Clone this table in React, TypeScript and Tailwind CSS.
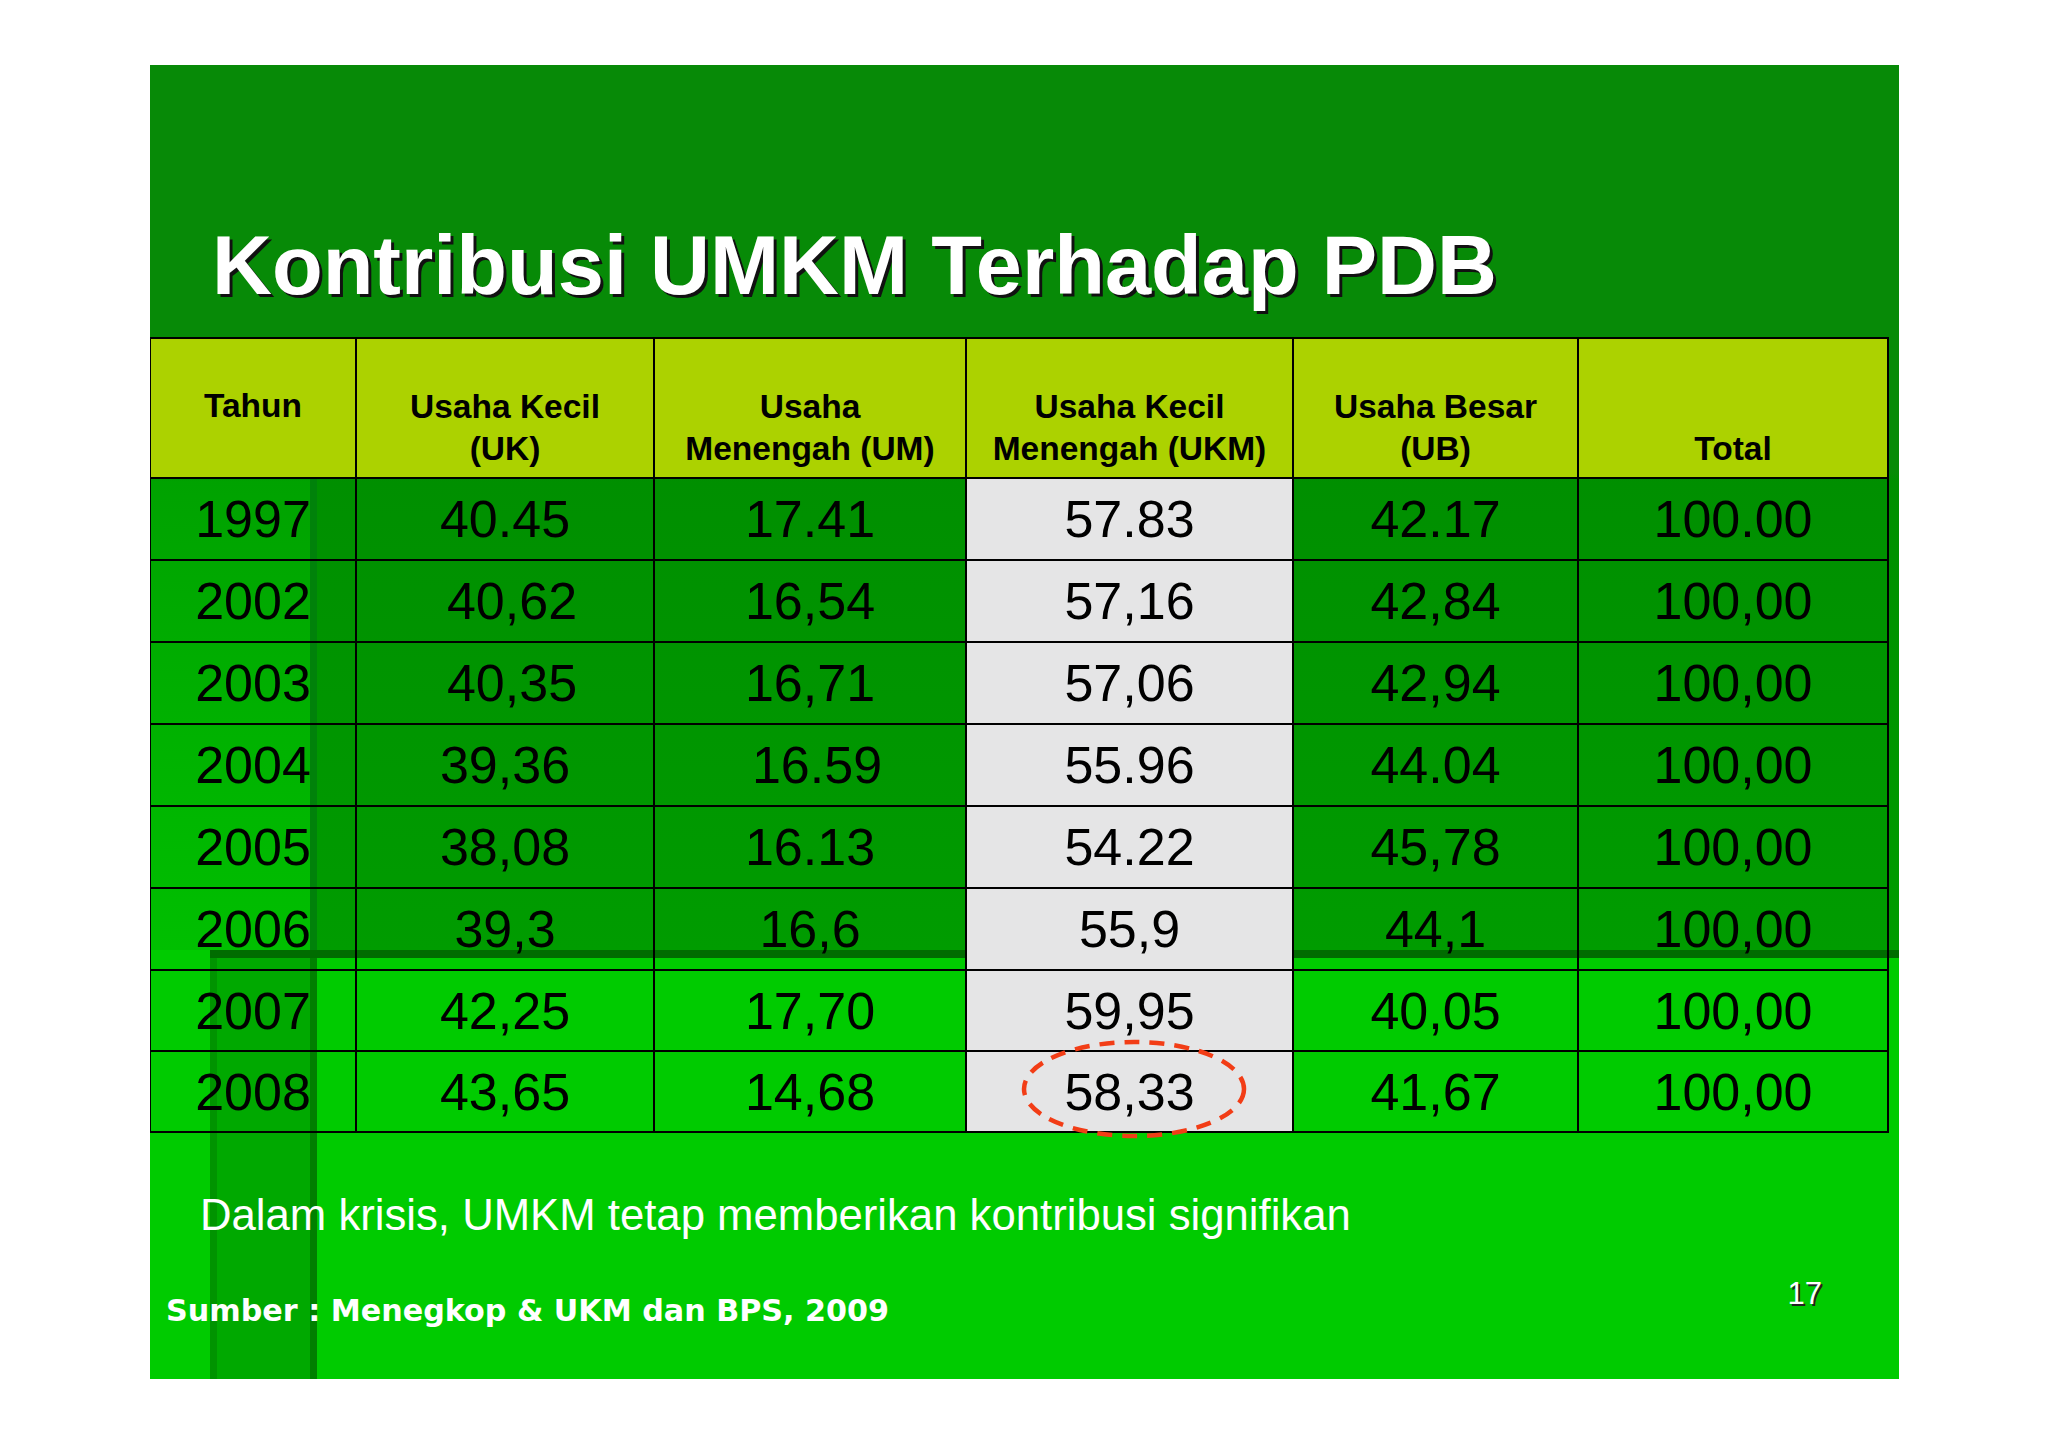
import React from "react";

type Row = { year: string; cells: { v: string; shift?: boolean }[] };

const rows: Row[] = [
  { year: "1997", cells: [{ v: "40.45" }, { v: "17.41" }, { v: "57.83" }, { v: "42.17" }, { v: "100.00" }] },
  { year: "2002", cells: [{ v: "40,62", shift: true }, { v: "16,54" }, { v: "57,16" }, { v: "42,84" }, { v: "100,00" }] },
  { year: "2003", cells: [{ v: "40,35", shift: true }, { v: "16,71" }, { v: "57,06" }, { v: "42,94" }, { v: "100,00" }] },
  { year: "2004", cells: [{ v: "39,36" }, { v: "16.59", shift: true }, { v: "55.96" }, { v: "44.04" }, { v: "100,00" }] },
  { year: "2005", cells: [{ v: "38,08" }, { v: "16.13" }, { v: "54.22" }, { v: "45,78" }, { v: "100,00" }] },
  { year: "2006", cells: [{ v: "39,3" }, { v: "16,6" }, { v: "55,9" }, { v: "44,1" }, { v: "100,00" }] },
  { year: "2007", cells: [{ v: "42,25" }, { v: "17,70" }, { v: "59,95" }, { v: "40,05" }, { v: "100,00" }] },
  { year: "2008", cells: [{ v: "43,65" }, { v: "14,68" }, { v: "58,33" }, { v: "41,67" }, { v: "100,00" }] },
];

const rowHeights = [82, 82, 82, 82, 82, 82, 81, 81];

export default function App() {
  return (
    <div className="w-[2048px] h-[1447px] bg-white overflow-hidden pt-[65px] pl-[150px]">
      <div className="relative w-[1749px] h-[1314px] bg-[#00cb00] overflow-hidden">
        {/* background art */}
        <div className="absolute left-[160px] top-0 right-0 h-[885px] bg-[linear-gradient(to_bottom,#078a07_0%,#078a07_46%,#008f00_47%,#009c00_100%)]" />
        <div className="absolute left-0 top-0 w-[160px] h-[885px] bg-[linear-gradient(to_bottom,#078a07_0%,#078a07_46%,#00a200_47%,#00bf00_100%)]" />
        <div className="absolute left-[160px] top-[412px] w-[7px] h-[473px] bg-[#00820a]" />
        <div className="absolute left-[60px] top-[885px] right-0 h-[8px] bg-[#006c00]" />
        <div className="absolute left-[60px] top-[893px] w-[107px] bottom-0 bg-[#00a900] border-l-[7px] border-l-[#009400] border-r-[7px] border-r-[#008000]" />

        {/* content */}
        <div className="relative flex flex-col">
          <h1
            className="mt-[160px] ml-[62px] text-white font-bold text-[83px] leading-[82px] [text-shadow:3px_3px_0_#111]"
            style={{ fontFamily: '"Liberation Sans", Arial, sans-serif' }}
          >
            Kontribusi UMKM Terhadap PDB
          </h1>

          <table
            className="mt-[30px] ml-[-1px] w-[1738px] table-fixed border-collapse"
            style={{ fontFamily: '"Liberation Sans", Arial, sans-serif' }}
          >
            <colgroup>
              <col className="w-[206px]" />
              <col className="w-[298px]" />
              <col className="w-[312px]" />
              <col className="w-[327px]" />
              <col className="w-[285px]" />
              <col className="w-[310px]" />
            </colgroup>
            <thead>
              <tr className="h-[140px] bg-[#acd200] text-black font-bold text-[33.5px] leading-[42px]">
                <th className="border-[2.5px] border-black align-middle pb-[4px] font-bold">Tahun</th>
                <th className="border-[2.5px] border-black align-bottom pb-[7px] font-bold">
                  Usaha Kecil
                  <br />
                  (UK)
                </th>
                <th className="border-[2.5px] border-black align-bottom pb-[7px] font-bold">
                  Usaha
                  <br />
                  Menengah (UM)
                </th>
                <th className="border-[2.5px] border-black align-bottom pb-[7px] font-bold">
                  Usaha Kecil
                  <br />
                  Menengah (UKM)
                </th>
                <th className="border-[2.5px] border-black align-bottom pb-[7px] font-bold">
                  Usaha Besar
                  <br />
                  (UB)
                </th>
                <th className="border-[2.5px] border-black align-bottom pb-[7px] font-bold">Total</th>
              </tr>
            </thead>
            <tbody className="text-black text-[52px] leading-[60px]">
              {rows.map((r, i) => (
                <tr key={r.year} style={{ height: rowHeights[i] }}>
                  <td className="border-[2.5px] border-black text-center align-middle p-0">{r.year}</td>
                  {r.cells.map((c, j) => (
                    <td
                      key={j}
                      className={
                        "border-[2.5px] border-black text-center align-middle p-0 " +
                        (j === 2 ? "bg-[#e5e5e6] " : "") +
                        (c.shift ? "pl-[14px]" : "")
                      }
                    >
                      {c.v}
                    </td>
                  ))}
                </tr>
              ))}
            </tbody>
          </table>

          <p
            className="mt-[57px] ml-[50px] text-white text-[43.7px] leading-[49px]"
            style={{ fontFamily: '"Liberation Sans", Arial, sans-serif' }}
          >
            Dalam krisis, UMKM tetap memberikan kontribusi signifikan
          </p>

          <div className="mt-[54px] flex items-start">
            <p
              className="ml-[16px] text-white font-bold text-[30.2px] leading-[35px]"
              style={{ fontFamily: '"DejaVu Sans", Verdana, sans-serif' }}
            >
              Sumber : Menegkop &amp; UKM dan BPS, 2009
            </p>
            <span
              className="ml-auto mr-[77px] -mt-[17px] text-white text-[31px] leading-[35px] [text-shadow:2px_2px_0_#222]"
              style={{ fontFamily: '"Liberation Sans", Arial, sans-serif' }}
            >
              17
            </span>
          </div>
        </div>

        {/* dashed highlight around 58,33 */}
        <svg
          className="absolute left-[869px] top-[972px] w-[230px] h-[104px]"
          viewBox="0 0 230 104"
          fill="none"
        >
          <ellipse
            cx="115"
            cy="52"
            rx="110"
            ry="47"
            stroke="#f23d16"
            strokeWidth="4.5"
            strokeDasharray="15 10"
          />
        </svg>
      </div>
    </div>
  );
}
